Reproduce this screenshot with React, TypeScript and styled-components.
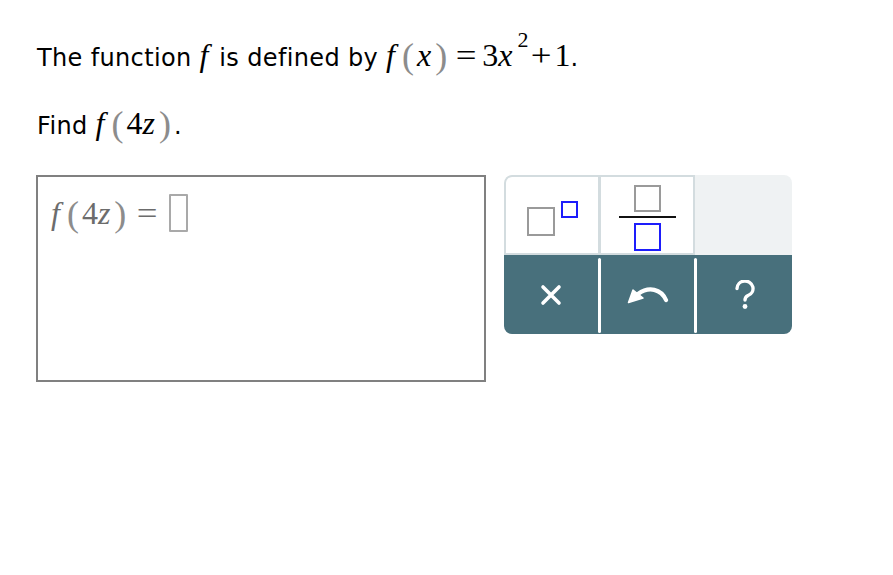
import React from "react";
import styled, { createGlobalStyle } from "styled-components";

const GlobalStyle = createGlobalStyle`
  html, body {
    margin: 0;
    padding: 0;
    background: #fff;
  }
  body {
    font-family: "DejaVu Sans", Verdana, sans-serif;
    color: #000;
  }
`;

const Page = styled.div`
  padding: 40px 0 0 36px;
`;

const Para = styled.p<{ $gap: number }>`
  margin: 0 0 ${(p) => p.$gap}px 1px;
  font-size: 24px;
  letter-spacing: 0.35px;
  line-height: 36px;
  height: 36px;
  white-space: nowrap;
`;

const MathExpr = styled.span<{ $muted?: boolean }>`
  font-family: "Liberation Serif", "Times New Roman", serif;
  font-size: 32px;
  letter-spacing: 0;
  line-height: 0;
  color: ${(p) => (p.$muted ? "#6c6c6c" : "#000")};
`;

const Var = styled.i<{ $pad?: number }>`
  font-family: "Liberation Serif", "Times New Roman", serif;
  font-style: italic;
  padding-right: ${(p) => p.$pad ?? 1}px;
`;

const Paren = styled.span`
  display: inline-block;
  font-size: 36px;
  color: #8c8c8c;
  vertical-align: -2px;
  margin: 0 3px;
`;

const Sup = styled.sup`
  font-size: 22px;
  vertical-align: 19px;
  line-height: 0;
  margin: 0 0 0 4px;
`;

const Op = styled.span<{ $space: number }>`
  display: inline-block;
  margin: 0 ${(p) => p.$space}px;
  transform: scaleX(1.15);
`;

const Row = styled.div`
  display: flex;
  align-items: flex-start;
  gap: 18px;
  margin-top: 31px;
`;

const AnswerBox = styled.div`
  box-sizing: border-box;
  width: 450px;
  height: 207px;
  border: 2px solid #808080;
  padding: 16px 0 0 13px;
  display: flex;
  align-items: flex-start;
`;

const AnswerLine = styled.div`
  display: flex;
  align-items: center;
  height: 40px;
`;

const Slot = styled.span`
  display: inline-block;
  box-sizing: border-box;
  width: 19px;
  height: 38px;
  border: 2px solid #a9a9a9;
  border-radius: 1px;
  margin-left: 4px;
`;

const Keypad = styled.div`
  width: 288px;
  border-radius: 8px;
  overflow: hidden;
  display: flex;
  flex-direction: column;
`;

const TopRow = styled.div`
  display: flex;
  height: 80px;
  background: #eff2f3;
`;

const TemplateKey = styled.button<{ $w: number; $first?: boolean }>`
  box-sizing: border-box;
  width: ${(p) => p.$w}px;
  height: 100%;
  padding: 0;
  background: #fff;
  border: 2px solid #d3dcdf;
  ${(p) => (p.$first ? "border-top-left-radius: 8px;" : "border-left-width: 1px;")}
  display: flex;
  align-items: center;
  justify-content: center;
  cursor: pointer;
`;

const Box = styled.span<{ $w: number; $h: number; $blue?: boolean }>`
  display: block;
  box-sizing: border-box;
  width: ${(p) => p.$w}px;
  height: ${(p) => p.$h}px;
  border: 2px solid ${(p) => (p.$blue ? "#1d1dfb" : "#9a9a9a")};
`;

const PowerGlyph = styled.span`
  display: flex;
  align-items: flex-start;
  gap: 6px;
  padding-top: 6px;

  & > :first-child {
    margin-top: 6px;
  }
`;

const FractionGlyph = styled.span`
  display: flex;
  flex-direction: column;
  align-items: center;
  padding-top: 6px;
`;

const FractionBar = styled.span`
  display: block;
  width: 57px;
  height: 2px;
  background: #111;
  margin: 4px 0 5px;
`;

const BottomRow = styled.div`
  display: flex;
  height: 79px;
  background: #48707c;
`;

const ActionKey = styled.button<{ $w: number }>`
  width: ${(p) => p.$w}px;
  height: 100%;
  padding: 0;
  border: none;
  background: transparent;
  display: flex;
  align-items: center;
  justify-content: center;
  cursor: pointer;
`;

const Divider = styled.span`
  width: 3px;
  background: #fff;
  border-radius: 2px;
  margin: 3px 0 1px;
`;

const CloseIcon = () => (
  <svg width="22" height="22" viewBox="0 0 22 22">
    <path d="M3 3 L19 19 M19 3 L3 19" stroke="#fff" strokeWidth="3.6" strokeLinecap="round" />
  </svg>
);

const UndoIcon = () => (
  <svg width="42" height="18" viewBox="0 0 42 18">
    <path d="M39 14 C34 3 22 0 11 8" fill="none" stroke="#fff" strokeWidth="4.2" strokeLinecap="round" />
    <path d="M1.5 16.5 L6 4 L16 12 Z" fill="#fff" stroke="#fff" strokeWidth="1.5" strokeLinejoin="round" />
  </svg>
);

const HelpIcon = () => (
  <svg width="22" height="30" viewBox="0 0 22 30">
    <path d="M3 8.5 A8 7.5 0 1 1 14 15.5 Q11 17 11 20" fill="none" stroke="#fff" strokeWidth="3.4" strokeLinecap="round" />
    <circle cx="11" cy="26.5" r="2.4" fill="#fff" />
  </svg>
);

const App: React.FC = () => {
  return (
    <Page>
      <GlobalStyle />
      <Para $gap={32}>
        The function <MathExpr><Var $pad={3}>f</Var></MathExpr> is defined by{" "}
        <MathExpr>
          <Var $pad={4}>f</Var>
          <Paren>(</Paren>
          <Var>x</Var>
          <Paren>)</Paren>
          <Op $space={7}>=</Op>3<Var>x</Var>
          <Sup>2</Sup>
          <Op $space={4}>+</Op>1
        </MathExpr>
        .
      </Para>
      <Para $gap={0}>
        Find{" "}
        <MathExpr>
          <Var $pad={4}>f</Var>
          <Paren>(</Paren>4<Var>z</Var>
          <Paren>)</Paren>
        </MathExpr>
        .
      </Para>
      <Row>
        <AnswerBox>
          <AnswerLine>
            <MathExpr $muted>
              <Var $pad={4}>f</Var>
              <Paren>(</Paren>4<Var>z</Var>
              <Paren>)</Paren>
              <Op $space={9}>=</Op>
            </MathExpr>
            <Slot />
          </AnswerLine>
        </AnswerBox>
        <Keypad>
          <TopRow>
            <TemplateKey $w={96} $first aria-label="exponent">
              <PowerGlyph>
                <Box $w={28} $h={29} />
                <Box $w={17} $h={17} $blue />
              </PowerGlyph>
            </TemplateKey>
            <TemplateKey $w={95} aria-label="fraction">
              <FractionGlyph>
                <Box $w={27} $h={27} />
                <FractionBar />
                <Box $w={27} $h={28} $blue />
              </FractionGlyph>
            </TemplateKey>
          </TopRow>
          <BottomRow>
            <ActionKey $w={94} aria-label="clear">
              <CloseIcon />
            </ActionKey>
            <Divider />
            <ActionKey $w={93} aria-label="undo">
              <UndoIcon />
            </ActionKey>
            <Divider />
            <ActionKey $w={95} aria-label="help">
              <HelpIcon />
            </ActionKey>
          </BottomRow>
        </Keypad>
      </Row>
    </Page>
  );
};

export default App;
